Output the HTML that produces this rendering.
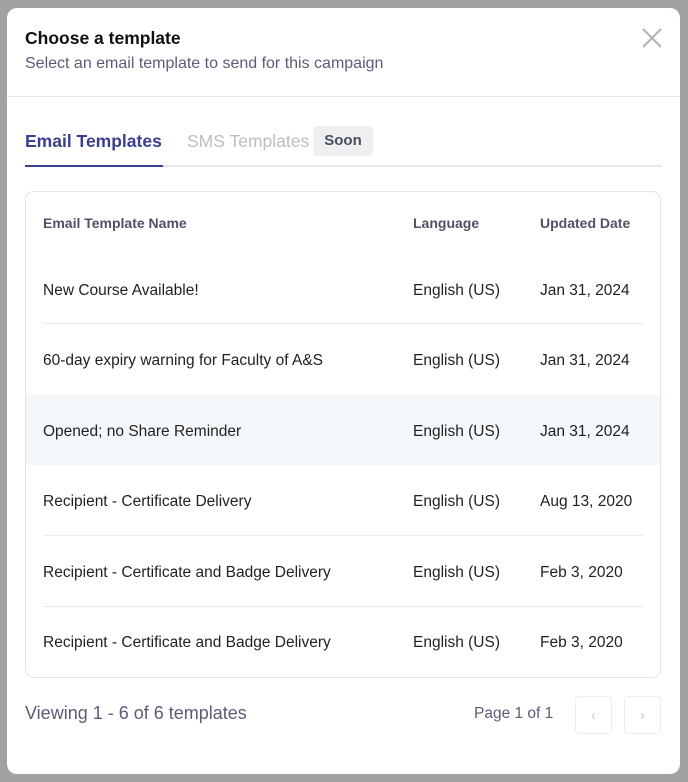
<!DOCTYPE html>
<html><head><style>
body{margin:0;width:688px;height:782px;background:#a1a2a4;font-family:"Liberation Sans",sans-serif;position:relative;overflow:hidden}
.m{position:absolute;left:7px;top:8px;width:673px;height:766px;background:#fff;border-radius:10px}
.a{position:absolute;white-space:nowrap}
.t{left:18px;top:20px;font-size:17.5px;font-weight:bold;color:#111}
.s{left:18px;top:47px;font-size:16px;color:#5a5d74}
.hr{position:absolute;left:0;right:0;top:88px;height:1px;background:#e4e4e8}
.card{position:absolute;left:18px;top:183px;width:634px;height:485px;border:1px solid #e3e4e8;border-radius:9px;overflow:hidden}
.row{position:absolute;left:0;width:634px;height:70px;font-size:15.5px;color:#222}
.row span{position:absolute;top:28px}
.sep{position:absolute;left:17px;width:600px;height:1px;background:#ececef}
.btn{position:absolute;top:688px;width:35px;height:36px;border:1px solid #eeeef0;border-radius:4px;color:#c5c6cc;font-size:14px;text-align:center;line-height:36px}
</style></head><body>
<div class="m">
<div class="a t">Choose a template</div>
<div class="a s">Select an email template to send for this campaign</div>
<svg class="a" style="left:635px;top:20px" width="20" height="20"><path d="M1 1L19 19M19 1L1 19" stroke="#b0b1b6" stroke-width="2"/></svg>
<div class="hr"></div>
<div class="a" style="left:18px;top:123px;font-size:17.5px;font-weight:bold;color:#3b3f8f">Email Templates</div>
<div class="a" style="left:180px;top:123px;font-size:17.5px;color:#bcbdc2">SMS Templates</div>
<div class="a" style="left:306px;top:118px;width:60px;height:30px;background:#eeeff1;border-radius:4px;font-size:15px;font-weight:bold;color:#4a4d60;text-align:center;line-height:30px">Soon</div>
<div class="a" style="left:18px;top:157px;width:637px;height:2px;background:#e8e8ec"></div>
<div class="a" style="left:18px;top:157px;width:138px;height:2px;background:#3b3f8f"></div>
<div class="card">
<div class="row" style="top:0;font-weight:bold;font-size:14px;color:#4f5266"><span style="left:17px;top:23px">Email Template Name</span><span style="left:387px;top:23px">Language</span><span style="left:514px;top:23px">Updated Date</span></div>
<div class="row" style="top:62px"><span style="left:17px">New Course Available!</span><span style="left:387px">English (US)</span><span style="left:514px">Jan 31, 2024</span></div>
<div class="sep" style="top:131px"></div>
<div class="row" style="top:132px"><span style="left:17px">60-day expiry warning for Faculty of A&amp;S</span><span style="left:387px">English (US)</span><span style="left:514px">Jan 31, 2024</span></div>
<div class="row" style="top:203px;background:#f4f8fb"><span style="left:17px">Opened; no Share Reminder</span><span style="left:387px">English (US)</span><span style="left:514px">Jan 31, 2024</span></div>
<div class="row" style="top:273px"><span style="left:17px">Recipient - Certificate Delivery</span><span style="left:387px">English (US)</span><span style="left:514px">Aug 13, 2020</span></div>
<div class="sep" style="top:343px"></div>
<div class="row" style="top:344px"><span style="left:17px">Recipient - Certificate and Badge Delivery</span><span style="left:387px">English (US)</span><span style="left:514px">Feb 3, 2020</span></div>
<div class="sep" style="top:414px"></div>
<div class="row" style="top:414px"><span style="left:17px">Recipient - Certificate and Badge Delivery</span><span style="left:387px">English (US)</span><span style="left:514px">Feb 3, 2020</span></div>
</div>
<div class="a" style="left:18px;top:695px;font-size:18px;color:#5a5d74">Viewing 1 - 6 of 6 templates</div>
<div class="a" style="left:467px;top:697px;font-size:15.5px;color:#5a5d74">Page 1 of 1</div>
<div class="btn" style="left:568px">&#8249;</div>
<div class="btn" style="left:617px">&#8250;</div>
</div>
</body></html>
